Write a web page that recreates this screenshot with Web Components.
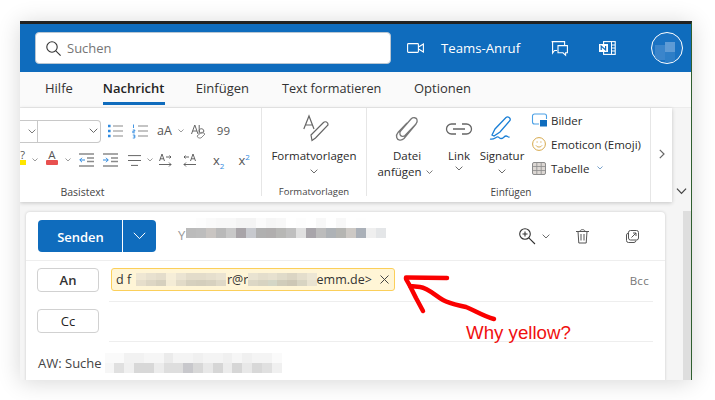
<!DOCTYPE html>
<html lang="de"><head><meta charset="utf-8"><title>Outlook</title>
<style>
html,body{margin:0;background:#fff;height:400px;overflow:hidden}
body{font-family:"Open Sans","Noto Sans",sans-serif;color:#242424}
</style></head><body>
<outlook-window>
  <app-header slot="header"></app-header>
  <ribbon-tabs slot="tabs"></ribbon-tabs>
  <ribbon-bar slot="ribbon"></ribbon-bar>
  <compose-card slot="compose"></compose-card>
</outlook-window>
<red-annotation></red-annotation>
<script>
const BASE=`*{box-sizing:border-box}:host{box-sizing:border-box}svg{display:block;flex:none;overflow:visible}`;
function def(name,html){customElements.define(name,class extends HTMLElement{constructor(){super();this.attachShadow({mode:'open'}).innerHTML=html}})}
const chev=(w=8,c='#555')=>`<svg width="${w}" height="${w*.6}" viewBox="0 0 10 6" fill="none" stroke="${c}" stroke-width="1.1"><path d="M.8.8 5 5 9.2.8"/></svg>`;

customElements.define('pixel-mosaic',class extends HTMLElement{
  constructor(){super();this.attachShadow({mode:'open'})}
  connectedCallback(){
    const cw=+this.getAttribute('cell')||10,ch=+this.getAttribute('rowh')||10;
    const rows=this.getAttribute('rows').split('|').map(r=>r.trim().split(/\s+/));
    this.shadowRoot.innerHTML=`<style>:host{display:inline-flex;flex-direction:column;flex:none}div{display:flex}i{display:block;width:${cw}px;height:${ch}px;flex:none}</style>`+
      rows.map(r=>`<div>${r.map(c=>`<i style="background:#${c}"></i>`).join('')}</div>`).join('');
  }
});

def('outlook-window',`<style>${BASE}
:host{display:block;position:absolute;left:20px;top:21px;width:672px;height:359px;background:#f5f5f5;box-shadow:0 2px 22px rgba(0,0,0,.16);border-top:3px solid #222;border-right:1px solid #2f5f2f;overflow:hidden}
.stack{display:flex;flex-direction:column;height:100%}
.col{flex:1;min-width:0;min-height:0;display:flex;flex-direction:column}
</style><div class="stack"><slot name="header"></slot><slot name="tabs"></slot><div class="col"><slot name="ribbon"></slot><slot name="compose"></slot></div></div>`);

def('app-header',`<style>${BASE}
:host{display:flex;align-items:center;height:48px;background:#0f6cbd;color:#fff;flex:none;font-size:13.2px}
.search{margin-left:15px;width:356px;height:32px;background:#fff;border:1px solid #b9c6d2;border-radius:4px;display:flex;align-items:center;padding-left:10px;gap:6px;color:#757575;font-size:13px}
.avatar{width:32px;height:32px;border:1.2px solid #fff;border-radius:50%;margin-left:35px;background:#1a72c2;overflow:hidden;display:flex;align-items:center;justify-content:center}
.avatar b{display:block;width:10px;height:10px;background:#5f9bd5;margin-left:6px;margin-top:-2px;box-shadow:-10px 3px 0 #3b85cb,-10px 8px 0 #3b85cb,0 10px 0 #2e7ec7}
</style>
<div class="search"><svg width="15" height="15" viewBox="0 0 15 15" fill="none" stroke="#333" stroke-width="1.1"><circle cx="6" cy="6" r="5.2"/><path d="M9.8 9.8 14.6 14.6"/></svg><span>Suchen</span></div>
<svg style="margin-left:16px" width="17" height="10" viewBox="0 0 17 10" fill="none" stroke="#fff" stroke-width="1.1"><rect x=".6" y=".6" width="10.8" height="8.8" rx=".8"/><path d="M11.5 4 16.4 1v8L11.500 6"/></svg>
<span style="margin-left:17px;white-space:nowrap;width:79px">Teams-Anruf</span>
<svg style="margin-left:31px" width="17" height="15" viewBox="0 0 17 15" fill="none" stroke="#fff" stroke-width="1.1"><path d="M.6.6h13v3.5M6 9.500H3.500L1.600 12V.6"/><path d="M7 4.600h9.400v7.200h-1.800v2.400l-2.600-2.400H7z"/></svg>
<svg style="margin-left:31px" width="17" height="14" viewBox="0 0 17 14" fill="none"><rect x="4.600" y=".6" width="11.600" height="12.800" stroke="#fff" stroke-width="1.100"/><path d="M12.500 1v12M13 4h3M13 7h3M13 10h3" stroke="#fff" stroke-width="1"/><rect x="0" y="3" width="9" height="8" fill="#fff"/><path d="M2.200 9V5L6.600 9V5" stroke="#0f6cbd" stroke-width="1.200"/></svg>
<div class="avatar"><b></b></div>`);

def('ribbon-tabs',`<style>${BASE}
:host{display:flex;height:36px;background:#fafafa;flex:none;padding-left:25px;gap:31px;font-size:13px;border-bottom:1px solid #ececec;color:#333}
span{display:block;height:35px;line-height:32px;white-space:nowrap;position:relative}
span.on{font-weight:600;color:#242424;width:62px;margin-left:-1px}
span.on::after{content:"";position:absolute;left:0;right:0;top:30px;height:3px;background:#0f6cbd}
</style><span>Hilfe</span><span class="on">Nachricht</span><span>Einfügen</span><span style="font-size:12.7px;margin-left:2px;width:99px">Text formatieren</span><span style="margin-left:2px">Optionen</span>`);

const g='#8a8a8a',b='#2f8ae0';
def('ribbon-bar',`<style>${BASE}
:host{display:flex;height:94px;width:652px;background:#fff;flex:none;box-shadow:0 1px 4px rgba(0,0,0,.2);overflow:hidden;font-size:11.5px;position:relative;z-index:1}
.group{display:flex;flex-direction:column;border-right:1.5px solid #e6e6e6;height:88px;flex:none;position:relative}
.label{position:absolute;left:0;right:0;top:77px;text-align:center;font-size:10.5px;line-height:14px;color:#444;white-space:nowrap}
.row{display:flex;align-items:center;flex:none}
.combo{width:81px;height:23px;border:1px solid #c8c8c8;border-left:0;border-radius:0 4px 4px 0;display:flex;align-items:center}
.combo i{width:18px;height:100%;border-right:1px solid #c8c8c8;display:flex;align-items:center;justify-content:center;padding-left:8px;padding-right:2px}
.combo u{flex:1;display:flex;justify-content:flex-end;padding-right:2px}
.t{font-size:12px;color:#555;line-height:14px;white-space:nowrap}
.big{position:relative;flex:none;display:flex;flex-direction:column;align-items:center;text-align:center;font-size:11.500px;line-height:16px;color:#2b2b2b;white-space:nowrap}
.slist{display:flex;flex-direction:column;font-size:11.500px;color:#2b2b2b}
.slist div{display:flex;align-items:center;height:24px;white-space:nowrap}
.more{flex:none;width:22px;height:94px;display:flex;align-items:center;justify-content:center;border-left:1.500px solid #e6e6e6;padding-bottom:2px}
.bar{display:flex;flex-direction:column;justify-content:flex-end;align-items:center;height:22px;padding-bottom:6px}
.bar em{display:block;height:5px;flex:none}
</style>
<div class="group" style="width:242px">
 <div class="row" style="margin-top:11px;height:24px">
  <div class="combo"><i>${chev(8,'#666')}</i><u>${chev(9,'#666')}</u></div>
  <svg style="margin-left:7px" width="15" height="14" viewBox="0 0 15 14" fill="none"><path d="M5 2h10M5 7h10M5 12h10" stroke="${g}" stroke-width="1.200"/><path d="M0 .8h2.600v2.400H0zM0 5.800h2.600v2.400H0zM0 10.800h2.600v2.400H0z" fill="${b}"/></svg>
  <svg style="margin-left:9px" width="16" height="15" viewBox="0 0 16 15" fill="none"><path d="M6 2h10M6 7h10M6 12h10" stroke="${g}" stroke-width="1.200"/><path d="M1.500.5v3.500M.8 6h2v1.200H.8v1.600h2M.8 11h2v1.200H1.500 M2.800 12v2H.8" stroke="${b}" stroke-width=".9"/></svg>
  <span class="t" style="margin-left:9px;font-size:12.500px">aA</span><span style="margin-left:6px">${chev(6,'#666')}</span>
  <svg style="margin-left:7px" width="15" height="15" viewBox="0 0 15 15" fill="none" stroke="#666" stroke-width="1"><path d="M.5 10 3.800 1 7 10M1.600 7h4.400M8.200 1v8.600M8.200 6.600c0-2.500 4.600-2.600 4.600.4s-4.600 2.800-4.600-.4"/><path d="m6 12 5-4 3 2-4 4H7.500z" stroke="${g}"/></svg>
  <span class="t" style="margin-left:11px;font-size:11.500px">99</span>
 </div>
 <div class="row" style="margin-top:5px;height:24px">
  <div class="bar" style="width:6px"><span class="t" style="font-size:11px;line-height:11px;margin-left:-1px">?</span><em style="width:6px;background:#ffe600"></em></div>
  <span style="margin-left:6px">${chev(6,'#666')}</span>
  <div class="bar" style="margin-left:8px;width:12px"><span class="t" style="line-height:11px;font-size:11.500px">A</span><em style="width:12px;background:#e8504f;border-radius:1px"></em></div>
  <span style="margin-left:7px">${chev(6,'#666')}</span>
  <svg style="margin-left:8px" width="15" height="14" viewBox="0 0 15 14" fill="none"><path d="M0 1h15M8 5h7M8 8.500h7M0 13h15" stroke="${g}" stroke-width="1.300"/><path d="M6 7H.8M3 4.800.8 7 3 9.200" stroke="${b}" stroke-width="1"/></svg>
  <svg style="margin-left:9px" width="15" height="14" viewBox="0 0 15 14" fill="none"><path d="M0 1h15M8 5h7M8 8.500h7M0 13h15" stroke="${g}" stroke-width="1.300"/><path d="M0 7h5.200M3 4.800 5.200 7 3 9.200" stroke="${b}" stroke-width="1"/></svg>
  <svg style="margin-left:10px" width="13" height="11" viewBox="0 0 13 11" fill="none" stroke="#666" stroke-width="1"><path d="M0 .6h13M0 5.500h13M3 10.400h7"/></svg>
  <span style="margin-left:6px">${chev(6,'#666')}</span>
  <svg style="margin-left:6px" width="13" height="15" viewBox="0 0 13 15" fill="none" stroke="#555" stroke-width=".9"><path d="M.5 8 3 1l2.500 7M1.300 5.800h3.400M0 11.500h12M10 9.500l2 2-2 2"/><path d="M7 4h5M10.500 2.500 12 4l-1.500 1.500"/></svg>
  <svg style="margin-left:11px" width="13" height="15" viewBox="0 0 13 15" fill="none" stroke="#555" stroke-width=".9"><path d="M7.500 8 10 1l2.500 7M8.300 5.800h3.400M1 11.500h12M3 9.500l-2 2 2 2M1 4h5M2.500 2.500 1 4l1.500 1.500"/></svg>
  <span class="t" style="margin-left:17px;font-size:13px">x<sub style="font-size:8px;color:${b};line-height:0">2</sub></span>
  <span class="t" style="margin-left:14px;font-size:13px">x<sup style="font-size:8px;color:${b};line-height:0">2</sup></span>
 </div>
 <div class="label" style="width:125px;right:auto">Basistext</div>
</div>
<div class="group" style="width:105px">
 <div class="big" style="margin-top:7px">
  <svg style="margin-left:4px" width="26" height="27" viewBox="0 0 26 27" fill="none" stroke="#666" stroke-width="1.200"><path d="M.8 14 6 1l5 13M2.600 10h7"/><path d="M9 25.500 8 20 20.500 7.500c1.500-1.500 5-.5 4.500 2.500L12.500 23z"/></svg>
  <span style="margin-top:6px">Formatvorlagen</span>
  <span style="margin-top:5px">${chev(8,'#555')}</span>
 </div>
 <div class="label" style="font-size:9.500px">Formatvorlagen</div>
</div>
<div class="group" style="width:283px;border-right:0">
 <div class="row" style="align-items:flex-start;margin-top:8px;height:76px">
  <div class="big" style="width:56px;margin-left:10px">
   <svg style="margin-left:4px" width="22" height="25" viewBox="0 0 22 25" fill="none" stroke="#777" stroke-width="1.300"><path d="M20 8 9 19.500c-1.500 1.500-4.500 1-5-1-.5-1.500 0-3 1-4L15 3c2-2 5.500-1.500 6 .5.500 1.500 0 3-1 4.500L8 22.500c-2.500 2.500-6.500 2-7.300-1-.5-2 .3-4 1.500-5.300L11 7"/></svg>
   <span style="margin-top:7px;margin-left:4px">Datei</span>
   <span style="display:flex;align-items:center;gap:4px">anfügen ${chev(7,'#555')}</span>
  </div>
  <div class="big" style="width:28px;margin-left:12px">
   <svg style="margin-top:7px" width="26" height="12" viewBox="0 0 26 12" fill="none" stroke="#666" stroke-width="1.300"><path d="M10 1H5.500a5 5 0 0 0 0 10H10M16 1h4.500a5 5 0 0 1 0 10H16M7 6h12"/></svg>
   <span style="margin-top:13px">Link</span>
   <span style="margin-top:2px">${chev(8,'#555')}</span>
  </div>
  <div class="big" style="width:46px;margin-left:6px">
   <svg style="margin-left:2px" width="26" height="25" viewBox="0 0 26 25" fill="none" stroke="#1a7fd6" stroke-width="1.300"><path d="M2 19 5 13 16 1.500c2-1.500 5 .5 4 3L10 16 4 20zM0 23c3 1 5-1 7-2s1.500 1.500 4 1.500 3-2.500 5-2.500 1.500 1.500 3.500 1"/></svg>
   <span style="margin-top:7px">Signatur</span>
   <span style="margin-top:5px">${chev(8,'#555')}</span>
  </div>
  <div class="slist" style="margin-left:7px;margin-top:-8px">
   <div style="gap:4px"><svg width="15" height="14" viewBox="0 0 15 14" fill="none"><path d="M14.500 6V3a2 2 0 0 0-2-2h-10a2 2 0 0 0-2 2v6a2 2 0 0 0 2 2H7" stroke="#4aa0e6" stroke-width="1.100"/><rect x="8" y="7" width="7" height="6.500" fill="#0f6cbd"/></svg>Bilder</div>
   <div style="gap:5px"><svg width="14" height="14" viewBox="0 0 14 14" fill="none" stroke="#d6a84a" stroke-width="1"><circle cx="7" cy="7" r="6.400"/><path d="M4 8.500c1.500 2 4.500 2 6 0M4.500 5h1.200M8.300 5h1.200"/></svg>Emoticon (Emoji)</div>
   <div style="gap:5px"><svg width="14" height="13" viewBox="0 0 14 13"><rect x=".5" y=".5" width="13" height="12" rx="1.500" fill="#dcd7d3" stroke="#8c8c8c"/><path d="M4.800 0v13M9.200 0v13M0 4.500h14M0 8.500h14" stroke="#8c8c8c" stroke-width=".8"/></svg>Tabelle<span style="margin-left:3px">${chev(6,'#2f6fb0')}</span></div>
  </div>
 </div>
 <div class="label" style="width:288px;right:auto;font-size:10px">Einfügen</div>
</div>
<div class="more"><svg width="6" height="10" viewBox="0 0 6 10" fill="none" stroke="#666" stroke-width="1.200"><path d="M.8.800 5 5 .8 9.200"/></svg></div>`);

def('compose-card',`<style>${BASE}
:host{display:flex;flex:1;min-height:0;position:relative;padding-left:6px;padding-top:10px}
.card{width:639px;background:#fff;border-radius:4px 4px 0 0;box-shadow:0 0 3px rgba(0,0,0,.18);height:169px;display:flex;flex-direction:column;overflow:hidden;font-size:13px}
.top{height:49px;border-bottom:1px solid #eee;display:flex;align-items:center;flex:none;padding-left:12px}
.send{display:flex;height:32px;width:118px;background:#0f6cbd;border-radius:4px;color:#fff;font-size:13px;font-weight:600;flex:none}
.send span{width:85px;text-align:center;line-height:34px;border-right:1px solid #fff;flex:none;padding-left:1px}
.send u{flex:1;display:flex;align-items:center;justify-content:center}
.row{height:40px;display:flex;flex:none;align-items:flex-start;position:relative}
.btn{margin:7px 0 0 11px;width:62px;height:24px;border:1px solid #d1d1d1;border-radius:4px;text-align:center;line-height:22px;font-size:13px;font-weight:600;color:#333;background:#fff;flex:none}
.btn.l{font-weight:400;color:#242424}
.field{position:absolute;left:83px;right:12px;bottom:0;border-bottom:1px solid #eee;height:1px}
.chip{margin:7px 0 0 12px;width:284px;height:23px;background:#fff5d6;border:1px solid #fbcf5a;border-radius:3px;display:flex;align-items:center;padding-left:4px;font-size:12.500px;color:#333;white-space:nowrap;flex:none}
.chip span{flex:none}
.sub{display:flex;align-items:center;padding-left:12px;margin-top:2px;font-size:13px;color:#444;height:38px}
.spacer{flex:1}
.tool{display:flex;align-items:center;flex:none}
</style>
<div class="card">
 <div class="top">
  <div class="send"><span>Senden</span><u><svg width="13" height="8" viewBox="0 0 13 8" fill="none" stroke="#fff" stroke-width="1"><path d="M.8.800 6.500 6.600 12.200.800"/></svg></u></div>
  <div style="display:flex;align-items:flex-start;margin-left:22px;margin-top:-10px">
   <span style="width:8px;height:20px;margin-top:7px;font-size:13px;line-height:20px;color:#999;flex:none">Y</span>
   <pixel-mosaic rows="ffffff fdfdfd fafafa f8f8f8 f8f8f8 f4f4f4 f4f4f4 fbfbfb f6f6f6 f8f8f8 ffffff fdfdfd ffffff f8f8f8 ffffff f8f8f8 ffffff fefefe ffffff ffffff|bbbbbb bdbdbd c9c5c2 b9b9b9 c8c8c8 a8a4a8 c7c9ce b0b0b0 b0aeae b7b7b5 bfbfbf e0e0e0 a8a5aa bcbcbc aeb2b6 b5b5b2 cdc9c5 aab0b8 efefef e4e6e8"></pixel-mosaic>
  </div>
  <div class="spacer"></div>
  <div class="tool">
   <svg width="16" height="16" viewBox="0 0 16 16" fill="none" stroke="#333" stroke-width="1.100"><circle cx="6" cy="6" r="5.300"/><path d="M3.500 6h5M6 3.500v5M9.800 9.800 16 16"/></svg>
   <span style="margin-left:7px">${chev(8,'#555')}</span>
   <svg style="margin-left:26px" width="13" height="15" viewBox="0 0 13 15" fill="none" stroke="#555" stroke-width="1"><path d="M0 2.500h13M4 2.500C4 0 9 0 9 2.500M2 2.500l.8 11.500h7.400L11 2.500M5 5v6.500M8 5v6.500"/></svg>
   <svg style="margin-left:37px;margin-right:26px" width="13" height="13" viewBox="0 0 13 13" fill="none" stroke="#555" stroke-width="1"><rect x="2.500" y=".5" width="10" height="9.500" rx="2"/><path d="M2.500 3A2.200 2.200 0 0 0 .5 5v5.500a2 2 0 0 0 2 2H8A2.200 2.200 0 0 0 10 10.500M5.500 7.500 10 3M7 3h3v3"/></svg>
  </div>
 </div>
 <div class="row" style="height:41px">
  <div class="btn">An</div>
  <div class="chip"><span style="width:15px">d f</span><pixel-mosaic cell="10" rowh="6.500" style="margin-left:5px" rows="efe7d3 e8e1cf e4ddcb f6eed8 ebe4d2 e3dcca e3dcca e6dfcd eae3d1|e6decb ddd6c4 d6d0be f4ecd6 e2dbc8 d6d0be d4cebc d7d1bf dfd9c7"></pixel-mosaic><span style="width:21px;overflow:hidden;margin-left:1px">r@r</span><pixel-mosaic cell="9.800" rowh="6.500" rows="e9e3d1 e4decc e7e1cf e0dbc9 dbd5c3 e4decc ece6d4|dcd7c5 d7d3c1 d4d6c6 d0ccba cdc7b5 d8d4c2 e9e3d1"></pixel-mosaic><span>emm.de&gt;</span>
   <svg style="margin-left:8px" width="9" height="9" viewBox="0 0 9 9" fill="none" stroke="#444" stroke-width="1"><path d="m.5.500 8 8M8.500.500l-8 8"/></svg></div>
  <div class="spacer"></div>
  <span style="margin:12px 16px 0 0;font-size:11.500px;color:#777;letter-spacing:.3px">Bcc</span>
  <div class="field"></div>
 </div>
 <div class="row">
  <div class="btn l">Cc</div>
  <div class="field"></div>
 </div>
 <div class="sub"><span>AW: Suche</span><pixel-mosaic cell="9.830" style="margin-left:3px" rows="fafafa fafafa f2f2f2 f2f2f2 f6f6f6 f6f6f6 ebebeb f4f4f4 f4f4f4 f0f0f0 f4f4f4 f4f4f4 f0f0f0 f6f6f6 f0f0f0 f4f4f4 f4f4f4 fafafa|f6f6f6 e0e0e0 f0f0f0 d8d8d8 d8d8d8 ececec dedede dedede c8c8cc d8d8d8 e8e8e8 d6d6d6 ececec d6d6d6 e8e8e8 d8d8d8 e0e0e0 f0f0f0"></pixel-mosaic></div>
</div>
<svg style="position:absolute;left:656px;top:-14px" width="11" height="7" viewBox="0 0 12 8" fill="none" stroke="#444" stroke-width="1.400"><path d="M.8.800 6 6.200 11.200.800"/></svg>
<div style="position:absolute;right:0;top:9px;bottom:0;width:8px;background:#dedede"></div>`);

def('red-annotation',`<style>${BASE}
:host{display:block;position:absolute;left:0;top:0;width:715px;height:400px;pointer-events:none}
svg{position:absolute;left:0;top:0}
span{position:absolute;left:466px;top:322px;font:18.700px/22px "Liberation Sans",Arial,sans-serif;color:#f01010;white-space:nowrap}
</style>
<svg width="715" height="400" viewBox="0 0 715 400" fill="none" stroke="#fa0000" stroke-width="4.500" stroke-linecap="round" stroke-linejoin="round"><path d="M406 277.500 447 278"/><path d="M406 279 410 286 420 287 C428 288 436 296 443 300 C450 304 458 305 466 307 C474 310 483 316 494 319"/><path d="M410 286 416 298 423 311"/></svg>
<span>Why yellow?</span>`);
</script>
</body></html>
